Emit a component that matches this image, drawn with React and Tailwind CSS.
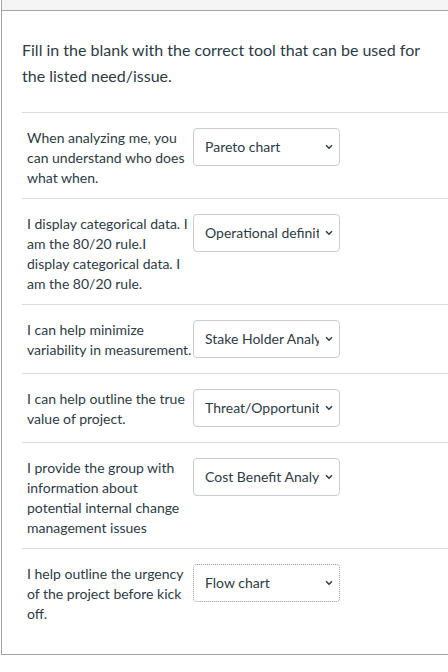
import React from "react";

const rows = [
  { text: "When analyzing me, you can understand who does what when.", value: "Pareto chart" },
  {
    text: (
      <>
        I display categorical data. I am the 80/20 rule.I
        <br />
        display categorical data. I am the 80/20 rule.
      </>
    ),
    value: "Operational definition",
  },
  { text: "I can help minimize variability in measurement.", value: "Stake Holder Analysis" },
  { text: "I can help outline the true value of project.", value: "Threat/Opportunity" },
  { text: "I provide the group with information about potential internal change management issues", value: "Cost Benefit Analysis" },
  { text: "I help outline the urgency of the project before kick off.", value: "Flow chart", focus: true },
];

function Chevron() {
  return (
    <svg width="8" height="6" viewBox="0 0 8 6" className="shrink-0">
      <path d="M1 1.2 L4 4.2 L7 1.2" fill="none" stroke="#2d3b45" strokeWidth="1.5" />
    </svg>
  );
}

function Select({ value, focus }) {
  return (
    <div
      className={
        "w-[147px] h-[38px] mb-[5px] flex items-center gap-[6px] pl-[11px] pr-[6px] rounded-[4px] bg-white shrink-0 " +
        (focus ? "border border-dotted border-[#9a9a9a]" : "border border-[#c7cdd1]")
      }
    >
      <div className="flex-1 overflow-hidden whitespace-nowrap text-[14px] leading-[20px] text-[#2d3b45]">
        {value}
      </div>
      <Chevron />
    </div>
  );
}

export default function App() {
  return (
    <div
      className="w-[448px] h-[672px] overflow-hidden bg-white"
      style={{ fontFamily: "Lato, 'Open Sans', sans-serif" }}
    >
      <div className="ml-[1px] w-[470px] border-l border-b border-[#a5a5a5]">
        <div className="h-[11px] bg-[#f5f5f5] border-b border-[#a5a5a5]"></div>
        <div className="pl-[20px] pb-[20px]">
          <div className="pt-[26px] pb-[23px] pr-[40px] text-[16px] leading-[26px] text-[#2d3b45]">
            Fill in the blank with the correct tool that can be used for the listed need/issue.
          </div>
          {rows.map((r, i) => (
            <div key={i} className="border-t border-[#dbdbdb] pt-[15px] pb-[10px] pl-[5px] flex items-start">
              <div className="w-[165px] mr-[1px] text-[14px] leading-[20px] text-[#2d3b45]">{r.text}</div>
              <Select value={r.value} focus={r.focus} />
            </div>
          ))}
        </div>
      </div>
    </div>
  );
}
